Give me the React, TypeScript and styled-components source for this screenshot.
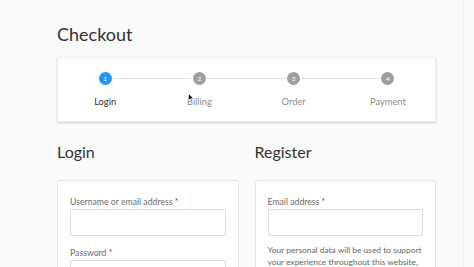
import React from "react";
import styled, { createGlobalStyle } from "styled-components";

const GlobalStyle = createGlobalStyle`
  html, body { margin: 0; padding: 0; }
  body {
    background: #fafafa;
    font-family: Lato, "Open Sans", "Liberation Sans", sans-serif;
    color: #333;
    overflow: hidden;
  }
  * { box-sizing: border-box; }
`;

const Page = styled.div`
  display: flex;
  height: 267px;
  overflow: hidden;
`;

const Main = styled.main`
  width: 464px;
  height: 100%;
  border-right: 1px solid #efefef;
  padding: 22px 0 0 57px;
`;

const Content = styled.div`
  width: 379px;
`;

const Title = styled.h1`
  margin: 0;
  font-size: 18px;
  line-height: 24px;
  font-weight: 400;
  color: #333;
`;

const StepperCard = styled.div`
  position: relative;
  margin-top: 11px;
  background: #fff;
  border: 1px solid #f0f0f0;
  box-shadow: 0 1px 2px rgba(0, 0, 0, 0.18);
  display: grid;
  grid-template-columns: repeat(4, 1fr);
  padding: 14px 0 13px;
`;

const Step = styled.div<{ $last?: boolean }>`
  position: relative;
  display: flex;
  flex-direction: column;
  align-items: center;
  &::after {
    content: "";
    display: ${(p) => (p.$last ? "none" : "block")};
    position: absolute;
    top: 6px;
    left: calc(50% + 8px);
    right: calc(-50% + 8px);
    height: 1px;
    background: #e2e2e2;
  }
`;

const Dot = styled.div<{ $active?: boolean }>`
  width: 13px;
  height: 13px;
  border-radius: 50%;
  background: ${(p) => (p.$active ? "#2196f3" : "#9e9e9e")};
  color: #fff;
  font-size: 6.5px;
  line-height: 13px;
  text-align: center;
`;

const StepLabel = styled.div<{ $active?: boolean }>`
  margin-top: 11px;
  font-size: 9.3px;
  line-height: 12px;
  color: ${(p) => (p.$active ? "#333" : "#8a8a8a")};
`;

const Cursor = styled.svg`
  position: absolute;
  left: 130px;
  top: 35px;
`;

const Columns = styled.div`
  display: grid;
  grid-template-columns: 1fr 1fr;
  column-gap: 16px;
  margin-top: 19px;
`;

const Column = styled.section``;

const SectionTitle = styled.h2`
  margin: 0;
  font-size: 16px;
  line-height: 22px;
  font-weight: 400;
  color: #333;
`;

const FormCard = styled.div`
  margin-top: 17px;
  background: #fff;
  border: 1px solid #e4e4e4;
  border-radius: 3px;
  padding: 14px 12px 20px;
`;

const Label = styled.label<{ $spaced?: boolean }>`
  display: block;
  font-size: 8.7px;
  line-height: 13px;
  color: #6b6b6b;
  margin-top: ${(p) => (p.$spaced ? "10px" : "0")};
  margin-bottom: 1px;
`;

const Req = styled.span`
  color: #c62828;
`;

const Input = styled.div`
  height: 27px;
  border: 1px solid #dcdcdc;
  border-radius: 2px;
  background: #fff;
`;

const Note = styled.p`
  margin: 8px 0 0;
  font-size: 8.4px;
  line-height: 12.2px;
  color: #666;
`;

const steps = ["Login", "Billing", "Order", "Payment"];

export default function App() {
  return (
    <>
      <GlobalStyle />
      <Page>
        <Main>
          <Content>
            <Title>Checkout</Title>
            <StepperCard>
              {steps.map((s, i) => (
                <Step key={s} $last={i === steps.length - 1}>
                  <Dot $active={i === 0}>{i + 1}</Dot>
                  <StepLabel $active={i === 0}>{s}</StepLabel>
                </Step>
              ))}
              <Cursor width="6" height="9" viewBox="0 0 6 9">
                <path d="M0.5 0.5 L0.5 7.5 L2.2 5.8 L3.4 8.5 L4.3 8.1 L3.2 5.5 L5.5 5.5 Z" fill="#111" stroke="#fff" strokeWidth="0.6" />
              </Cursor>
            </StepperCard>
            <Columns>
              <Column>
                <SectionTitle>Login</SectionTitle>
                <FormCard>
                  <Label>
                    Username or email address <Req>*</Req>
                  </Label>
                  <Input />
                  <Label $spaced>
                    Password <Req>*</Req>
                  </Label>
                  <Input />
                </FormCard>
              </Column>
              <Column>
                <SectionTitle>Register</SectionTitle>
                <FormCard>
                  <Label>
                    Email address <Req>*</Req>
                  </Label>
                  <Input />
                  <Note>
                    Your personal data will be used to support your experience throughout this website, to manage access to your account.
                  </Note>
                </FormCard>
              </Column>
            </Columns>
          </Content>
        </Main>
      </Page>
    </>
  );
}
